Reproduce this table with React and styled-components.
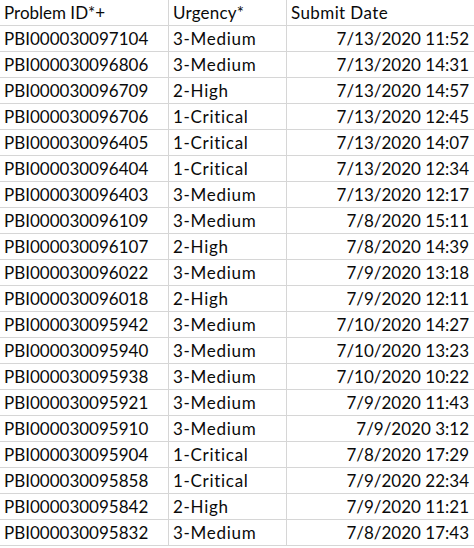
import React from 'react'
import styled, { createGlobalStyle } from 'styled-components'

const GlobalStyle = createGlobalStyle`
  html, body {
    margin: 0;
    padding: 0;
    background: #ffffff;
  }
`

const rows = [
  ['PBI000030097104', '3-Medium', '7/13/2020 11:52'],
  ['PBI000030096806', '3-Medium', '7/13/2020 14:31'],
  ['PBI000030096709', '2-High', '7/13/2020 14:57'],
  ['PBI000030096706', '1-Critical', '7/13/2020 12:45'],
  ['PBI000030096405', '1-Critical', '7/13/2020 14:07'],
  ['PBI000030096404', '1-Critical', '7/13/2020 12:34'],
  ['PBI000030096403', '3-Medium', '7/13/2020 12:17'],
  ['PBI000030096109', '3-Medium', '7/8/2020 15:11'],
  ['PBI000030096107', '2-High', '7/8/2020 14:39'],
  ['PBI000030096022', '3-Medium', '7/9/2020 13:18'],
  ['PBI000030096018', '2-High', '7/9/2020 12:11'],
  ['PBI000030095942', '3-Medium', '7/10/2020 14:27'],
  ['PBI000030095940', '3-Medium', '7/10/2020 13:23'],
  ['PBI000030095938', '3-Medium', '7/10/2020 10:22'],
  ['PBI000030095921', '3-Medium', '7/9/2020 11:43'],
  ['PBI000030095910', '3-Medium', '7/9/2020 3:12'],
  ['PBI000030095904', '1-Critical', '7/8/2020 17:29'],
  ['PBI000030095858', '1-Critical', '7/9/2020 22:34'],
  ['PBI000030095842', '2-High', '7/9/2020 11:21'],
  ['PBI000030095832', '3-Medium', '7/8/2020 17:43'],
]

const Sheet = styled.div`
  display: grid;
  grid-template-columns: 169px 118px 187px;
  width: 474px;
  font-family: Lato, 'Open Sans', sans-serif;
  font-size: 17px;
  color: #0a0a0a;
`

const Cell = styled.div`
  height: 26px;
  box-sizing: border-box;
  border-bottom: 1px solid #d6d6d6;
  border-right: ${props => props.last ? 'none' : '1px solid #d6d6d6'};
  padding: 0 5px 0 4px;
  display: flex;
  align-items: center;
  justify-content: ${props => props.right ? 'flex-end' : 'flex-start'};
  letter-spacing: ${props => props.spread || 0}px;
  white-space: nowrap;
`

const App = () => (
  <>
    <GlobalStyle />
    <Sheet>
      <Cell>Problem ID*+</Cell>
      <Cell spread={0.2}>Urgency*</Cell>
      <Cell last spread={0.4}>Submit Date</Cell>
      {rows.map(([id, urgency, date]) => (
        <React.Fragment key={id}>
          <Cell>{id}</Cell>
          <Cell spread={0.7}>{urgency}</Cell>
          <Cell last right>{date}</Cell>
        </React.Fragment>
      ))}
    </Sheet>
  </>
)

export default App
